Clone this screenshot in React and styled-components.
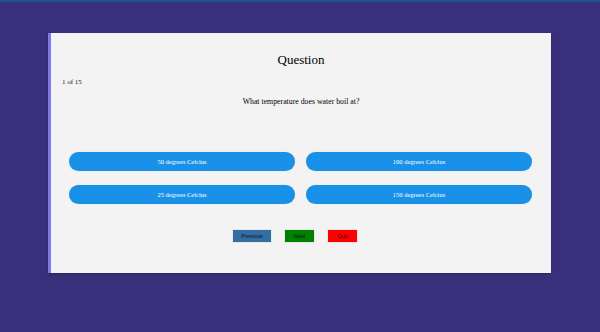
import React from 'react';
import styled, { createGlobalStyle } from 'styled-components';

const GlobalStyle = createGlobalStyle`
  html, body {
    margin: 0;
    padding: 0;
    background: #3a2f7b;
  }
  body {
    width: 600px;
    height: 332px;
    overflow: hidden;
    font-family: "Liberation Serif", serif;
  }
`;

const Page = styled.div`
  width: 600px;
  height: 332px;
  background: #3a2f7b;
  border-top: 2px solid #23528f;
  box-sizing: border-box;
  padding: 31px 49px 0 48px;
`;

const Card = styled.div`
  height: 240px;
  background: #f3f3f3;
  border-left: 3px solid #7f78e6;
  box-sizing: border-box;
  box-shadow: 0 1px 2px rgba(0, 0, 0, 0.25);
  padding: 19px 11px 0 11px;
  display: flex;
  flex-direction: column;
`;

const Title = styled.h1`
  margin: 0;
  font-size: 13px;
  font-weight: normal;
  text-align: center;
  color: #000;
  line-height: 16px;
`;

const Counter = styled.div`
  margin-top: 9px;
  font-size: 7px;
  line-height: 10px;
  color: #111;
`;

const QuestionText = styled.p`
  margin: 10px 0 0;
  font-size: 7.8px;
  line-height: 10px;
  text-align: center;
  color: #000;
`;

const Answers = styled.div`
  margin: 45px 8px 0 7px;
  display: grid;
  grid-template-columns: 1fr 1fr;
  column-gap: 11px;
  row-gap: 14px;
`;

const Answer = styled.button`
  height: 19px;
  border: none;
  border-radius: 10px;
  background: #1a91e8;
  color: #fff;
  font-family: "Liberation Serif", serif;
  font-size: 6.5px;
  padding: 0;
  box-shadow: 0 0 1px rgba(0, 0, 0, 0.2);
`;

const Nav = styled.div`
  margin-top: 25px;
  display: flex;
  justify-content: center;
  gap: 12px;
  padding-right: 12px;
`;

const NavButton = styled.button`
  width: ${p => p.$w}px;
  height: 14px;
  padding: 0;
  border: 1px solid #e8e8e8;
  background: ${p => p.$bg};
  color: #111;
  font-family: "Liberation Sans", Arial, sans-serif;
  font-size: 5.5px;
`;

const answers = [
  '50 degrees Celcius',
  '100 degrees Celcius',
  '25 degrees Celcius',
  '150 degrees Celcius',
];

export default function App() {
  return (
    <>
      <GlobalStyle />
      <Page>
        <Card>
          <Title>Question</Title>
          <Counter>1 of 15</Counter>
          <QuestionText>What temperature does water boil at?</QuestionText>
          <Answers>
            {answers.map(a => (
              <Answer key={a}>{a}</Answer>
            ))}
          </Answers>
          <Nav>
            <NavButton $w={40} $bg="#336ea4">Previous</NavButton>
            <NavButton $w={31} $bg="#008000">Next</NavButton>
            <NavButton $w={31} $bg="#ff0000">Quit</NavButton>
          </Nav>
        </Card>
      </Page>
    </>
  );
}
